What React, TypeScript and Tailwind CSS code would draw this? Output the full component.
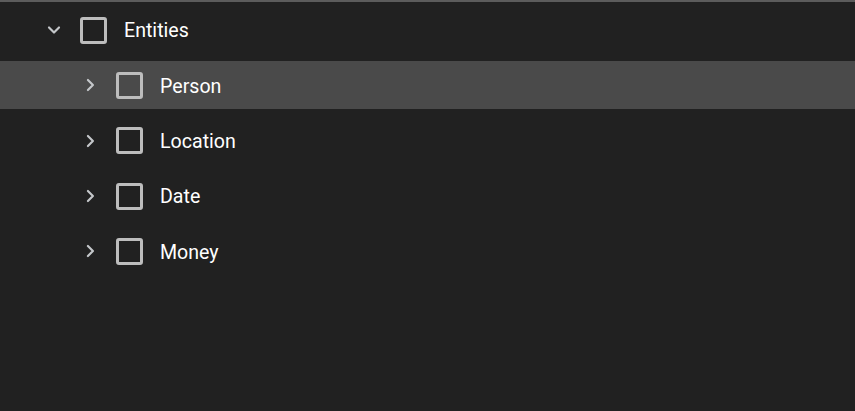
import React from 'react';

const children = ['Person', 'Location', 'Date', 'Money'];

function Chevron({ open }: { open?: boolean }) {
  return (
    <svg width="20" height="20" viewBox="0 0 24 24" className="text-[#c4c7ca]">
      {open ? (
        <path d="M6 9l6 6 6-6" fill="none" stroke="currentColor" strokeWidth="2.6" strokeLinecap="round" strokeLinejoin="round" />
      ) : (
        <path d="M9.5 6l6 6-6 6" fill="none" stroke="currentColor" strokeWidth="2.6" strokeLinecap="round" strokeLinejoin="round" />
      )}
    </svg>
  );
}

function Box() {
  return <div className="w-[27px] h-[27px] rounded-[3px] border-[3px] border-[#bdbdbd] shrink-0" />;
}

export default function App() {
  return (
    <div className="w-[855px] h-[411px] bg-[#212121] border-t-2 border-[#5c5c5c] font-['Roboto',sans-serif] text-white">
      <div className="pt-[4px] flex flex-col gap-[7.35px]">
        <div className="h-12 flex items-center pl-[44px]">
          <Chevron open />
          <div className="ml-[16px]"><Box /></div>
          <span className="ml-[17px] text-[19.6px] mt-[2px]">Entities</span>
        </div>
        {children.map((c, i) => (
          <div key={c} className={`h-12 flex items-center pl-[80px] ${i === 0 ? 'bg-[#4a4a4a]' : ''}`}>
            <Chevron />
            <div className="ml-[16px]"><Box /></div>
            <span className="ml-[17px] text-[19.6px] mt-[2px]">{c}</span>
          </div>
        ))}
      </div>
    </div>
  );
}
